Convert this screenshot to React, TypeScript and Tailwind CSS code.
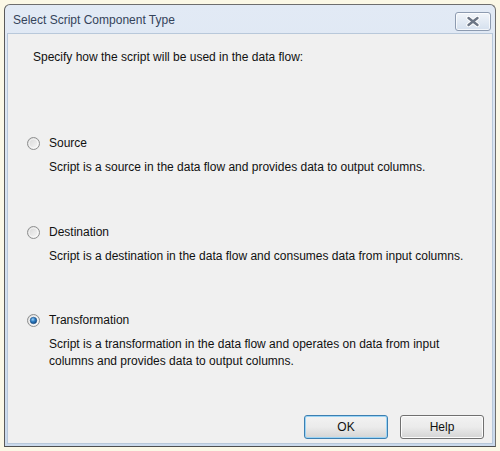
import React from 'react';

const font = { fontFamily: '"Liberation Sans", Arial, sans-serif' };

function Radio({ checked }: { checked?: boolean }) {
  return (
    <svg width="13" height="13" viewBox="0 0 13 13" className="shrink-0">
      <defs>
        <linearGradient id={checked ? 'rg1' : 'rg0'} x1="0" y1="0" x2="1" y2="1">
          <stop offset="0" stopColor="#d4d4d4" />
          <stop offset="1" stopColor="#fbfbfb" />
        </linearGradient>
        <radialGradient id="dot" cx="0.4" cy="0.35" r="0.7">
          <stop offset="0" stopColor="#9fd0f5" />
          <stop offset="0.45" stopColor="#2f7fc4" />
          <stop offset="1" stopColor="#0d3f78" />
        </radialGradient>
      </defs>
      <circle cx="6.5" cy="6.5" r="6" fill={`url(#${checked ? 'rg1' : 'rg0'})`} stroke="#8e8f8f" strokeWidth="1" />
      <circle cx="6.5" cy="6.5" r="4.4" fill="none" stroke="#ffffff" strokeOpacity="0.7" strokeWidth="0.8" />
      {checked && <circle cx="6.5" cy="6.5" r="3.3" fill="url(#dot)" stroke="#1b4f86" strokeWidth="0.5" />}
    </svg>
  );
}

function Option({ label, checked, children }: { label: string; checked?: boolean; children: React.ReactNode }) {
  return (
    <div className="-ml-[6px]">
      <div className="flex items-center h-4">
        <div className="w-[13px] flex justify-center">
          <Radio checked={checked} />
        </div>
        <span className="ml-[9px] leading-4">{label}</span>
      </div>
      <p className="mt-2 ml-[22px] leading-[17px]">{children}</p>
    </div>
  );
}

export default function App() {
  return (
    <div className="w-[500px] h-[451px] bg-[#fbf8e6] pt-[4px] pl-[4px] text-[12px]" style={font}>
      <div className="w-[492px] h-[443px] rounded-t-[6px] border border-[#6e6e6e] border-b-[#4f4f4f] border-l-[#5a5a5a] bg-gradient-to-b from-[#e2eaf5] to-[#cbdaec] flex flex-col">
        <div className="h-[28px] flex items-center justify-between pl-[8px] pr-[4px]">
          <span className="text-[#34435a] text-[12px] mt-[2px]">Select Script Component Type</span>
          <div className="w-[36px] h-[19px] mt-[4px] rounded-[3px] border border-[#8d9bb0] bg-gradient-to-b from-[#f1f5fa] to-[#d5e0ee] flex items-center justify-center shadow-[inset_0_0_0_1px_rgba(255,255,255,0.7)]">
            <svg width="16" height="11" viewBox="0 0 16 11">
              <path d="M3.5 2 L12.5 9 M12.5 2 L3.5 9" stroke="#ffffff" strokeWidth="4.4" strokeLinecap="round" />
              <path d="M3.5 2 L12.5 9 M12.5 2 L3.5 9" stroke="#6b7585" strokeWidth="2.4" strokeLinecap="round" />
            </svg>
          </div>
        </div>
        <div className="flex-1 mx-[2px] mb-[2px] border border-[#b8c8da] bg-[#f0f0f0] text-[#111111] flex flex-col pl-[25px] pr-[8px]">
          <p className="mt-[15px] leading-4">Specify how the script will be used in the data flow:</p>
          <div className="mt-[70px]">
            <Option label="Source">Script is a source in the data flow and provides data to output columns.</Option>
          </div>
          <div className="mt-[48px]">
            <Option label="Destination">Script is a destination in the data flow and consumes data from input columns.</Option>
          </div>
          <div className="mt-[47px]">
            <Option label="Transformation" checked>
              Script is a transformation in the data flow and operates on data from input
              <br />
              columns and provides data to output columns.
            </Option>
          </div>
          <div className="mt-auto mb-[4px] flex justify-end gap-[12px]">
            <button className="w-[84px] h-[24px] rounded-[3px] border border-[#3c7fb1] bg-gradient-to-b from-[#f2f2f2] via-[#ebebeb] to-[#d4d4d4] shadow-[inset_0_0_0_1px_#9bd4f5] text-[#111111]">
              OK
            </button>
            <button className="w-[84px] h-[24px] rounded-[3px] border border-[#707070] bg-gradient-to-b from-[#f2f2f2] via-[#ebebeb] to-[#d4d4d4] shadow-[inset_0_0_0_1px_#fcfcfc] text-[#111111]">
              Help
            </button>
          </div>
        </div>
      </div>
    </div>
  );
}
